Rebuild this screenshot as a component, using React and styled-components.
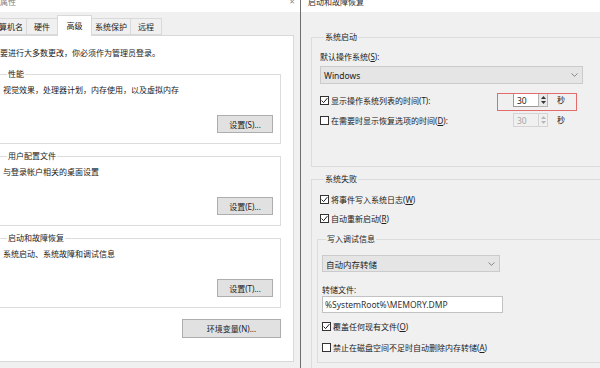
import styled, { createGlobalStyle } from "styled-components";

const GlobalStyle = createGlobalStyle`
  html, body {
    margin: 0;
    padding: 0;
    background: #f0f0f0;
  }
  body {
    font-family: "Noto Sans", "Noto Sans CJK SC", sans-serif;
    font-size: 8px;
    color: #202020;
  }
`;

export default function App() {
  return (
    <>
      <GlobalStyle />
      <Desktop>
        <SystemProperties />
        <StartupRecovery />
      </Desktop>
    </>
  );
}

function SystemProperties() {
  const tabs = ["计算机名", "硬件", "高级", "系统保护", "远程"];
  return (
    <LeftWindow>
      <TitleBar $inset={4}>
        <span>系统属性</span>
        <Close>✕</Close>
      </TitleBar>
      <LeftBody>
        <TabList>
          {tabs.map((t) => (
            <Tab key={t} $active={t === "高级"}>
              {t}
            </Tab>
          ))}
        </TabList>
        <Panel>
          <Intro>如要进行大多数更改，你必须作为管理员登录。</Intro>
          <SheetGroup>
            <Legend>性能</Legend>
            <GroupText>视觉效果，处理器计划，内存使用，以及虚拟内存</GroupText>
            <ButtonRow>
              <Button $width={56}>设置(S)...</Button>
            </ButtonRow>
          </SheetGroup>
          <SheetGroup>
            <Legend>用户配置文件</Legend>
            <GroupText>与登录帐户相关的桌面设置</GroupText>
            <ButtonRow>
              <Button $width={56}>设置(E)...</Button>
            </ButtonRow>
          </SheetGroup>
          <SheetGroup>
            <Legend>启动和故障恢复</Legend>
            <GroupText>系统启动、系统故障和调试信息</GroupText>
            <ButtonRow>
              <Button $width={56}>设置(T)...</Button>
            </ButtonRow>
          </SheetGroup>
          <EnvButton $width={99}>环境变量(N)...</EnvButton>
        </Panel>
      </LeftBody>
    </LeftWindow>
  );
}

function StartupRecovery() {
  return (
    <RightWindow>
      <TitleBar $inset={7} $active>
        <span>启动和故障恢复</span>
      </TitleBar>
      <RightBody>
        <OuterGroup $bottom={39}>
          <Legend>系统启动</Legend>
          <FieldLabel $top={9}>
            默认操作系统(<u>S</u>):
          </FieldLabel>
          <Select $top={3} $width={263} $height={18}>
            <span>Windows</span>
            <Chevron />
          </Select>
          <SpinRow $top={9}>
            <CheckLabel>
              <Check checked />
              <span>显示操作系统列表的时间(T):</span>
            </CheckLabel>
            <Spin value="30" marked />
          </SpinRow>
          <SpinRow $top={6}>
            <CheckLabel>
              <Check />
              <span>
                在需要时显示恢复选项的时间(<u>D</u>):
              </span>
            </CheckLabel>
            <Spin value="30" disabled />
          </SpinRow>
        </OuterGroup>
        <OuterGroup $gap={7} $bottom={20}>
          <Legend>系统失败</Legend>
          <CheckLabel $top={9}>
            <Check checked />
            <span>
              将事件写入系统日志(<u>W</u>)
            </span>
          </CheckLabel>
          <CheckLabel $top={7}>
            <Check checked />
            <span>
              自动重新启动(<u>R</u>)
            </span>
          </CheckLabel>
          <InnerGroup>
            <Legend>写入调试信息</Legend>
            <Select $top={11} $width={178} $height={17}>
              <span>自动内存转储</span>
              <Chevron />
            </Select>
            <FieldLabel $top={12} $line={11}>
              转储文件:
            </FieldLabel>
            <TextField>%SystemRoot%\MEMORY.DMP</TextField>
            <CheckLabel $top={7}>
              <Check checked />
              <span>
                覆盖任何现有文件(<u>O</u>)
              </span>
            </CheckLabel>
            <CheckLabel $top={9}>
              <Check />
              <span>
                禁止在磁盘空间不足时自动删除内存转储(<u>A</u>)
              </span>
            </CheckLabel>
          </InnerGroup>
        </OuterGroup>
      </RightBody>
    </RightWindow>
  );
}

function Check({ checked }) {
  return (
    <Box>
      {checked && (
        <svg width="7" height="7" viewBox="0 0 7 7">
          <path d="M0.6 3.6 L2.6 5.6 L6.4 1.1" fill="none" stroke="#1e1e1e" strokeWidth="1" />
        </svg>
      )}
    </Box>
  );
}

function Chevron() {
  return (
    <svg width="7" height="4" viewBox="0 0 7 4">
      <path d="M0.5 0.5 L3.5 3.3 L6.5 0.5" fill="none" stroke="#7a7a7a" strokeWidth="0.9" />
    </svg>
  );
}

function Spin({ value, disabled, marked }) {
  const fill = disabled ? "#b8b8b8" : "#333";
  return (
    <SpinGroup>
      <SpinField $disabled={disabled}>{value}</SpinField>
      <SpinArrows $disabled={disabled}>
        <svg width="5" height="3" viewBox="0 0 5 3">
          <path d="M0 3 L2.5 0 L5 3 Z" fill={fill} />
        </svg>
        <svg width="5" height="3" viewBox="0 0 5 3">
          <path d="M0 0 L2.5 3 L5 0 Z" fill={fill} />
        </svg>
      </SpinArrows>
      <Unit>秒</Unit>
      {marked && <RedMark />}
    </SpinGroup>
  );
}

const Desktop = styled.div`
  width: 600px;
  height: 368px;
  overflow: hidden;
  display: flex;
`;

const Window = styled.div`
  flex: none;
  height: 376px;
  margin-top: -8px;
  display: flex;
  flex-direction: column;
  background: #f0f0f0;
`;

const LeftWindow = styled(Window)`
  width: 320px;
  margin-left: -20px;
`;

const RightWindow = styled(Window)`
  width: 340px;
  border-left: 1px solid #6e6e6e;
`;

const TitleBar = styled.div`
  flex: none;
  height: 20px;
  display: flex;
  align-items: center;
  justify-content: space-between;
  padding: 0 5px 0 ${(p) => p.$inset}px;
  background: #fff;
  color: ${(p) => (p.$active ? "#2a2a2a" : "#808080")};
  line-height: 12px;
`;

const Close = styled.span`
  font-family: "DejaVu Sans", sans-serif;
  font-size: 7px;
  color: #8a8a8a;
`;

const LeftBody = styled.div`
  flex: 1;
  display: flex;
  flex-direction: column;
  padding: 0 6px 6px;
`;

const TabList = styled.div`
  position: relative;
  z-index: 1;
  height: 24px;
  margin-bottom: -1px;
  padding-left: 2px;
  display: flex;
  align-items: flex-end;
`;

const Tab = styled.div`
  box-sizing: border-box;
  min-width: ${(p) => (p.$active ? 35 : 32)}px;
  height: ${(p) => (p.$active ? 21 : 17)}px;
  margin-bottom: ${(p) => (p.$active ? 0 : 1)}px;
  margin-left: -1px;
  padding: 0 3px;
  display: flex;
  align-items: center;
  justify-content: center;
  background: ${(p) => (p.$active ? "#fff" : "#f0f0f0")};
  border: 1px solid #d9d9d9;
  border-bottom: ${(p) => (p.$active ? "none" : "1px solid #d9d9d9")};
  line-height: 12px;
  color: #222;
`;

const Panel = styled.div`
  flex: 1;
  display: flex;
  flex-direction: column;
  background: #fff;
  border: 1px solid #d9d9d9;
  padding: 11px 12px 0 5px;
`;

const Intro = styled.div`
  line-height: 12px;
  white-space: nowrap;
`;

const SheetGroup = styled.fieldset`
  margin: 7px 0 0 4px;
  padding: 0 7px 10px 6px;
  border: 1px solid #dcdcdc;
  min-width: 0;
  &:first-of-type {
    margin-top: 10px;
  }
`;

const Legend = styled.legend`
  margin-left: 4px;
  padding: 0 1px;
  line-height: 10px;
  color: #222;
  white-space: nowrap;
`;

const GroupText = styled.div`
  margin-top: 5px;
  line-height: 12px;
  white-space: nowrap;
`;

const ButtonRow = styled.div`
  display: flex;
  justify-content: flex-end;
  margin-top: 19px;
`;

const Button = styled.div`
  box-sizing: border-box;
  width: ${(p) => p.$width}px;
  height: 18px;
  display: flex;
  align-items: center;
  justify-content: center;
  background: #e1e1e1;
  border: 1px solid #adadad;
  color: #222;
  white-space: nowrap;
`;

const EnvButton = styled(Button)`
  align-self: flex-end;
  height: 19px;
  margin-top: 11px;
`;

const RightBody = styled.div`
  flex: 1;
  padding: 20px 10px 0;
  overflow: hidden;
`;

const OuterGroup = styled.fieldset`
  margin: ${(p) => p.$gap || 0}px 0 0;
  padding: 0 8px ${(p) => p.$bottom}px 8px;
  border: 1px solid #dcdcdc;
  min-width: 0;
`;

const InnerGroup = styled.fieldset`
  margin: 10px 0 0 -3px;
  padding: 0 8px 9px 4px;
  border: 1px solid #dcdcdc;
  min-width: 0;
`;

const FieldLabel = styled.div`
  margin-top: ${(p) => p.$top}px;
  line-height: ${(p) => p.$line || 12}px;
  white-space: nowrap;
`;

const Select = styled.div`
  box-sizing: border-box;
  width: ${(p) => p.$width}px;
  height: ${(p) => p.$height}px;
  margin-top: ${(p) => p.$top}px;
  padding: 0 4px 0 3px;
  display: flex;
  align-items: center;
  justify-content: space-between;
  background: #e5e5e5;
  border: 1px solid #cbcbcb;
  font-size: 8.5px;
  color: #222;
`;

const TextField = styled.div`
  box-sizing: border-box;
  width: 181px;
  height: 17px;
  margin-top: 1px;
  padding: 0 2px;
  display: flex;
  align-items: center;
  background: #fff;
  border: 1px solid #c2c2c2;
  font-size: 8.5px;
  color: #333;
`;

const SpinRow = styled.div`
  display: grid;
  grid-template-columns: 193px auto;
  justify-content: start;
  align-items: center;
  height: 14px;
  margin-top: ${(p) => p.$top}px;
`;

const CheckLabel = styled.div`
  display: flex;
  align-items: center;
  gap: 2px;
  height: 12px;
  margin-top: ${(p) => p.$top || 0}px;
  white-space: nowrap;
`;

const Box = styled.span`
  box-sizing: border-box;
  flex: none;
  width: 9px;
  height: 9px;
  display: flex;
  align-items: center;
  justify-content: center;
  background: #fff;
  border: 1px solid #333;
`;

const SpinGroup = styled.div`
  position: relative;
  justify-self: start;
  display: flex;
  align-items: center;
  height: 14px;
`;

const SpinField = styled.div`
  box-sizing: border-box;
  width: 25px;
  height: 14px;
  padding-left: 3px;
  display: flex;
  align-items: center;
  background: ${(p) => (p.$disabled ? "#f0f0f0" : "#fff")};
  border: 1px solid ${(p) => (p.$disabled ? "#d4d4d4" : "#9a9a9a")};
  border-right: none;
  color: ${(p) => (p.$disabled ? "#a6a6a6" : "#1a1a1a")};
  font-size: 8.5px;
`;

const SpinArrows = styled.div`
  box-sizing: border-box;
  width: 10px;
  height: 14px;
  display: flex;
  flex-direction: column;
  align-items: center;
  justify-content: space-evenly;
  background: ${(p) => (p.$disabled ? "#f0f0f0" : "#e9e9e9")};
  border: 1px solid ${(p) => (p.$disabled ? "#d4d4d4" : "#b4b4b4")};
`;

const Unit = styled.span`
  margin-left: 9px;
  line-height: 12px;
`;

const RedMark = styled.div`
  position: absolute;
  top: 0;
  left: -16px;
  right: -12px;
  bottom: -4px;
  border: 1px solid #e06c6c;
  pointer-events: none;
`;
